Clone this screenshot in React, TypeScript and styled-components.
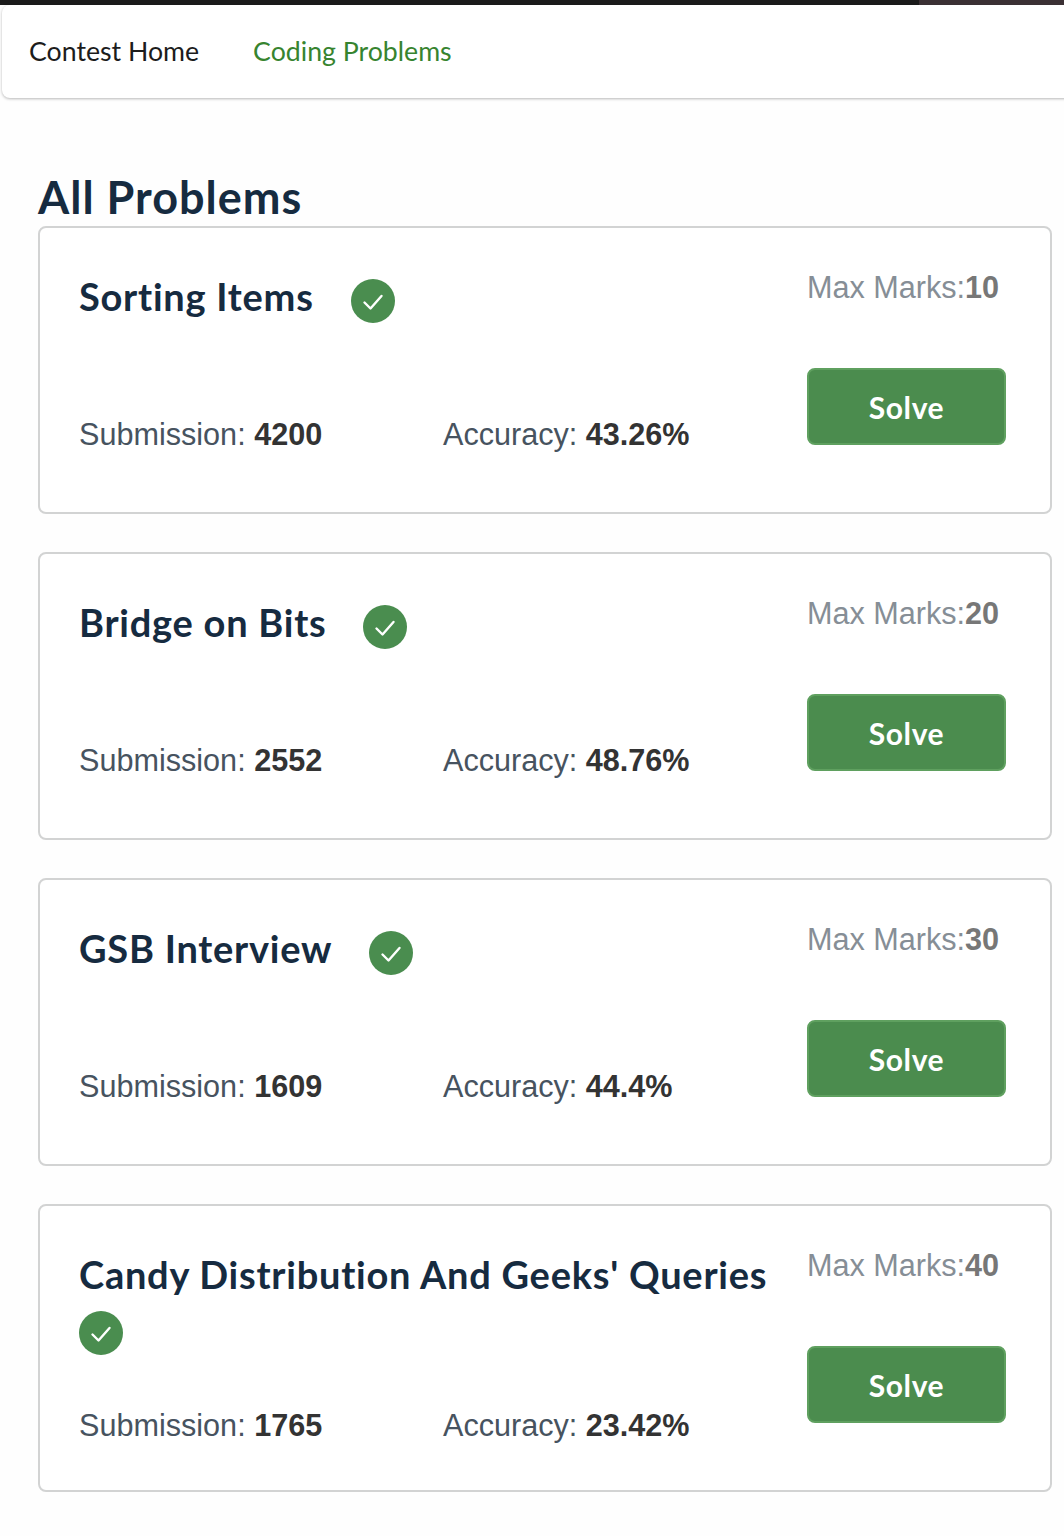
import React from "react";
import styled, { createGlobalStyle } from "styled-components";

const GlobalStyle = createGlobalStyle`
  html, body { margin: 0; padding: 0; background: #fefefe; overflow: hidden; }
  * { box-sizing: border-box; }
`;

const Page = styled.div`
  width: 1064px;
  height: 1536px;
  overflow: hidden;
  background: #fefefe;
`;

const TopStrip = styled.div`
  display: flex;
  height: 5px;
  background: #1b1b1b;
  justify-content: flex-end;
`;

const StripAccent = styled.div`
  width: 145px;
  background: #3b3034;
`;

const NavBar = styled.nav`
  display: flex;
  align-items: center;
  gap: 54px;
  height: 93px;
  width: 1080px;
  margin-left: 2px;
  padding: 0 0 1px 27px;
  background: #fff;
  border-radius: 8px;
  box-shadow: 0 1px 3px rgba(0, 0, 0, 0.28);
  font-family: Lato, "Liberation Sans", sans-serif;
  font-size: 26.7px;
`;

const NavLink = styled.span<{ $active?: boolean }>`
  color: ${(p) => (p.$active ? "#37842f" : "#1c1c1c")};
`;

const Main = styled.main`
  width: 1064px;
  padding: 70px 12px 0 38px;
`;

const Heading = styled.h1`
  margin: 0;
  height: 58px;
  font-family: Lato, "Liberation Sans", sans-serif;
  font-size: 45px;
  line-height: 58px;
  font-weight: 700;
  letter-spacing: 1px;
  color: #162b40;
`;

const CardList = styled.div`
  display: flex;
  flex-direction: column;
  gap: 38px;
`;

const Card = styled.section`
  display: flex;
  height: 288px;
  padding: 39px 44px 0 39px;
  background: #fff;
  border: 2px solid #d2d3d3;
  border-radius: 8px;
`;

const Info = styled.div`
  width: 728px;
  padding-top: 9px;
`;

const TitleBlock = styled.div`
  display: flex;
  flex-wrap: wrap;
  align-items: flex-start;
  column-gap: 37px;
  row-gap: 10px;
  min-height: 88px;
`;

const Title = styled.h2`
  margin: -2px 0 2px;
  font-family: Lato, "Liberation Sans", sans-serif;
  font-size: 38px;
  line-height: 44px;
  font-weight: 700;
  letter-spacing: 0.75px;
  color: #162b40;
`;

const Badge = styled.span`
  display: flex;
  width: 44px;
  height: 44px;
  margin-top: 3px;
  border-radius: 50%;
  background: #4a8d4f;
`;

const Stats = styled.div`
  display: flex;
  margin-top: 50px;
`;

const Stat = styled.div`
  width: 364px;
  font-family: "Liberation Sans", Arial, sans-serif;
  font-size: 30.6px;
  line-height: 40px;
  color: #47535f;
`;

const StatValue = styled.b`
  color: #333;
`;

const Side = styled.div`
  width: 199px;
`;

const Marks = styled.div`
  font-family: "Liberation Sans", Arial, sans-serif;
  font-size: 30.6px;
  line-height: 40px;
  color: #868e96;
  white-space: nowrap;
`;

const MarksValue = styled.b`
  color: #777;
`;

const SolveButton = styled.button`
  display: block;
  width: 199px;
  height: 77px;
  margin-top: 61px;
  padding: 0;
  background: #4b8c4e;
  border: 2px solid #5fa05f;
  border-radius: 8px;
  color: #fff;
  font-family: Lato, "Liberation Sans", sans-serif;
  font-size: 30px;
  font-weight: 700;
  letter-spacing: 0.6px;
`;

const CheckMark = () => (
  <svg width="44" height="44" viewBox="0 0 44 44" fill="none">
    <polyline
      points="13.5,23.5 19.5,29.5 30.5,17"
      stroke="#fff"
      strokeWidth="2.4"
      strokeLinecap="round"
      strokeLinejoin="round"
    />
  </svg>
);

const problems = [
  { title: "Sorting Items", marks: 10, submissions: 4200, accuracy: "43.26%" },
  { title: "Bridge on Bits", marks: 20, submissions: 2552, accuracy: "48.76%" },
  { title: "GSB Interview", marks: 30, submissions: 1609, accuracy: "44.4%" },
  { title: "Candy Distribution And Geeks' Queries", marks: 40, submissions: 1765, accuracy: "23.42%" },
];

export default function App() {
  return (
    <Page>
      <GlobalStyle />
      <TopStrip>
        <StripAccent />
      </TopStrip>
      <NavBar>
        <NavLink>Contest Home</NavLink>
        <NavLink $active>Coding Problems</NavLink>
      </NavBar>
      <Main>
        <Heading>All Problems</Heading>
        <CardList>
          {problems.map((p) => (
            <Card key={p.title}>
              <Info>
                <TitleBlock>
                  <Title>{p.title}</Title>
                  <Badge>
                    <CheckMark />
                  </Badge>
                </TitleBlock>
                <Stats>
                  <Stat>
                    Submission: <StatValue>{p.submissions}</StatValue>
                  </Stat>
                  <Stat>
                    Accuracy: <StatValue>{p.accuracy}</StatValue>
                  </Stat>
                </Stats>
              </Info>
              <Side>
                <Marks>
                  Max Marks:<MarksValue>{p.marks}</MarksValue>
                </Marks>
                <SolveButton>Solve</SolveButton>
              </Side>
            </Card>
          ))}
        </CardList>
      </Main>
    </Page>
  );
}
